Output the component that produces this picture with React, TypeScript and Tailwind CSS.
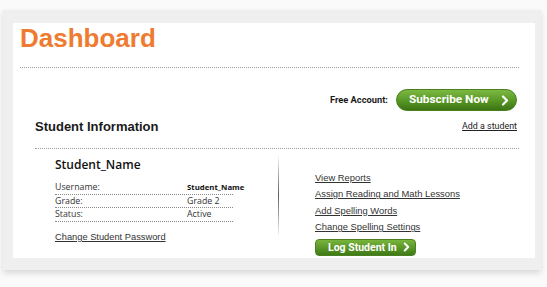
import React from "react";

const arial = "font-['Liberation_Sans',Arial,sans-serif]";
const roboto = "font-['Roboto','Liberation_Sans',sans-serif]";
const open = "font-['Open_Sans','DejaVu_Sans',sans-serif]";

function Chevron({ size = 8 }: { size?: number }) {
  return (
    <svg width={size} height={size + 3} viewBox="0 0 8 11" fill="none">
      <polyline
        points="2,1.5 6,5.5 2,9.5"
        stroke="white"
        strokeWidth="2.2"
        strokeLinecap="round"
        strokeLinejoin="round"
      />
    </svg>
  );
}

const rows = [
  { label: "Username:", value: "Student_Name", bold: true },
  { label: "Grade:", value: "Grade 2" },
  { label: "Status:", value: "Active" },
];

const links = [
  "View Reports",
  "Assign Reading and Math Lessons",
  "Add Spelling Words",
  "Change Spelling Settings",
];

export default function App() {
  return (
    <div className="w-[547px] h-[287px] bg-[#fafafa] pt-[10px] pl-[3px] overflow-hidden">
      <div className="w-[538px] h-[260px] bg-[#efefef] shadow-[0_3px_6px_rgba(0,0,0,0.14)] pt-[13px] pl-[10px]">
        <div className={`w-[522px] h-[235px] bg-white pl-[7px] pr-[16px] ${arial}`}>
          <h1 className="pt-[1.5px] text-[26px] leading-[26px] font-bold text-[#ef7b31]">
            Dashboard
          </h1>
          <div className="mt-[16.5px] border-t border-dotted border-[#9c9c9c]" />

          <div className="mt-[21px] flex h-[22px] items-center justify-end gap-[8px] pr-[2px]">
            <span className={`${roboto} text-[9.3px] font-bold text-[#1c1c1c]`}>
              Free Account:
            </span>
            <button
              className={`${roboto} flex h-[22px] w-[121px] items-center justify-between rounded-full border border-[#4a7f1c] bg-gradient-to-b from-[#7cb942] via-[#5a9a26] to-[#3c7414] pl-[12px] pr-[7px] text-[11.8px] font-bold text-white`}
            >
              <span>Subscribe Now</span>
              <Chevron />
            </button>
          </div>

          <div className="ml-[15px] mt-[9px] flex h-[13px] items-start justify-between pr-[2px]">
            <h2 className="text-[13px] leading-[13px] font-bold text-[#1a1a1a]">
              Student Information
            </h2>
            <a className={`${roboto} mt-[1.5px] text-[8.9px] leading-[9px] text-[#222] underline`}>
              Add a student
            </a>
          </div>
          <div className="ml-[15px] mt-[15px] border-t border-dotted border-[#9c9c9c]" />

          <div className="flex">
            <div className="ml-[35px] w-[223px] pt-[10.3px]">
              <div className={`${open} text-[12px] leading-[12px] font-semibold text-[#111]`}>
                Student_Name
              </div>
              <div className={`${open} mt-[10px] w-[178px] text-[8.8px] text-[#333]`}>
                {rows.map((r) => (
                  <div
                    key={r.label}
                    className="flex h-[13.5px] items-center border-b border-dotted border-[#8a8a8a] leading-[12.5px]"
                  >
                    <span className="w-[132px] shrink-0">{r.label}</span>
                    <span
                      className={
                        r.bold
                          ? "shrink-0 whitespace-nowrap text-[7.8px] font-bold text-[#111]"
                          : "shrink-0"
                      }
                    >
                      {r.value}
                    </span>
                  </div>
                ))}
              </div>
              <a className="mt-[10px] block text-[9.3px] leading-[10px] text-[#333] underline">
                Change Student Password
              </a>
            </div>

            <div className="mt-[6px] h-[80px] w-[1px] bg-gradient-to-b from-[#ffffff] via-[#5e5e5e] to-[#f4f4f4]" />

            <div className="ml-[36px] pt-[20.5px]">
              {links.map((l) => (
                <a
                  key={l}
                  className="block text-[9.4px] leading-[16.6px] text-[#333] underline"
                >
                  {l}
                </a>
              ))}
              <button
                className={`${roboto} mt-[3px] flex h-[17px] w-[101px] items-center rounded-[4px] border border-[#4b8020] bg-gradient-to-b from-[#78b53c] to-[#3f7a16] pl-[12px] text-[10.5px] font-bold text-white`}
              >
                <span>Log Student In</span>
                <span className="ml-[6px] flex items-center">
                  <Chevron size={7} />
                </span>
              </button>
            </div>
          </div>
        </div>
      </div>
    </div>
  );
}
